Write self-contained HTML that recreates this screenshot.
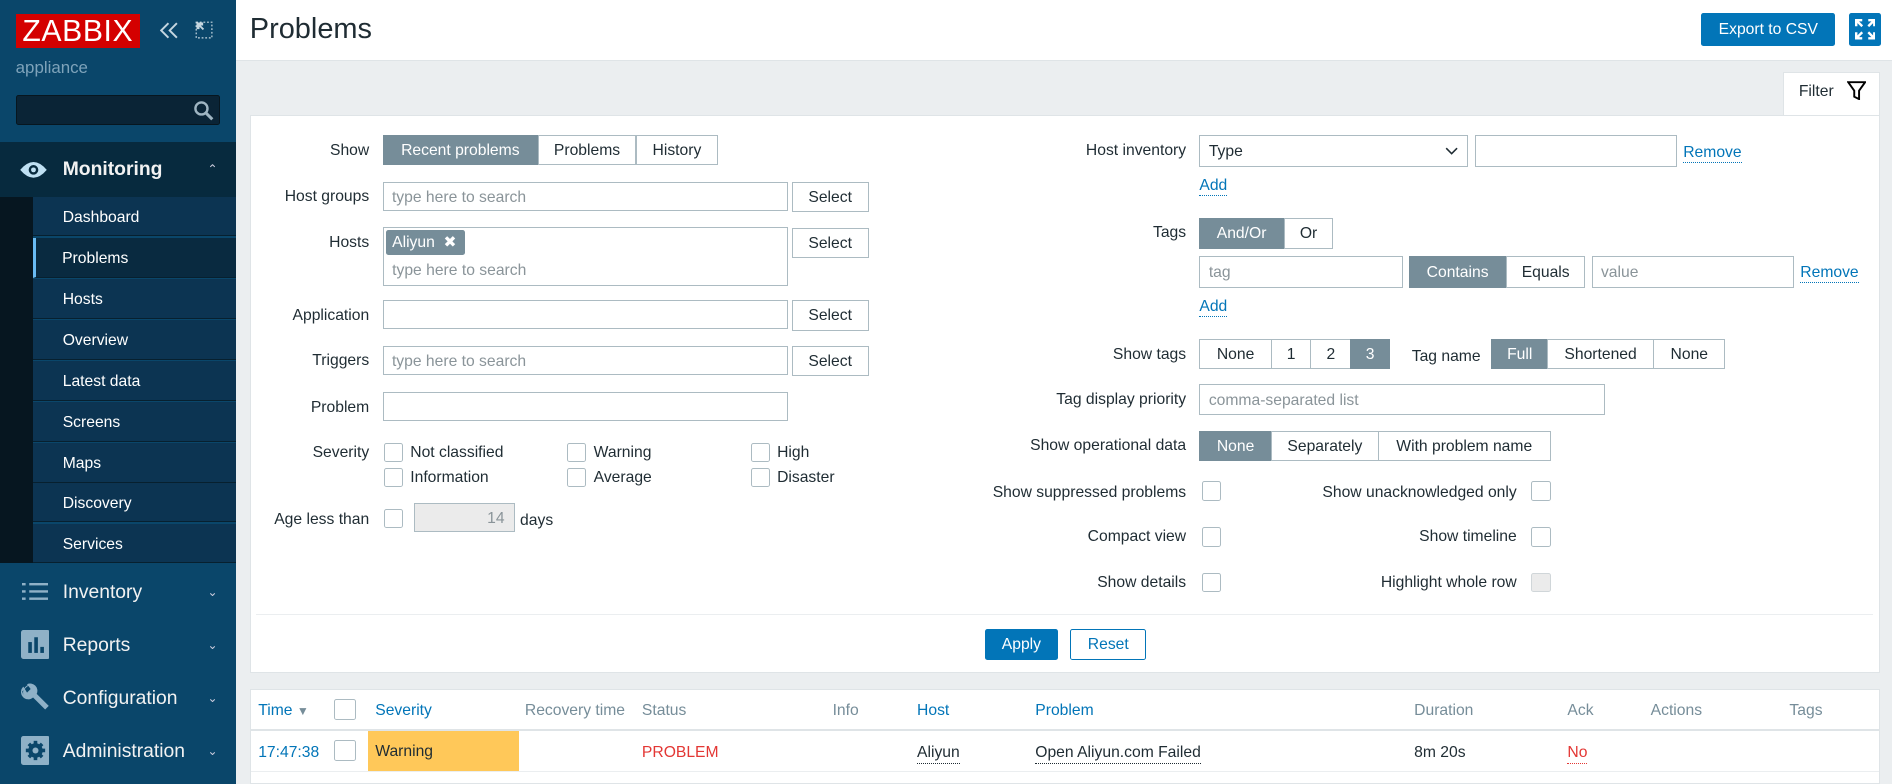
<!DOCTYPE html>
<html><head><meta charset="utf-8"><style>
html,body{margin:0;padding:0;overflow:hidden}
body{width:1568px;height:650px;zoom:1.20663;font-family:"Liberation Sans",Arial,sans-serif;font-size:13px;color:#1f2c33;background:#ebeef0;position:relative}
.a{position:absolute}
#side{left:0;top:0;width:196px;height:650px;background:#0a466a}
.logo{left:13px;top:12px;width:103px;height:28px;background:#d40000;color:#fff;font-size:25px;line-height:29px;text-align:center;letter-spacing:0.5px}
.sub{left:27px;width:169px;height:33px;background:#0c3452;border-bottom:1px solid #07202f;color:#fff;line-height:35px;padding-left:25px;box-sizing:border-box}
.mi{left:0;width:196px;height:44px;color:#f2f2f2;font-size:16px;line-height:46px}
.mi span.t{position:absolute;left:52px}
.mi span.c{position:absolute;left:172px;font-size:10px;color:#ccd}
.in{border:1px solid #acbbc2;background:#fff;height:24px;box-sizing:border-box;color:#8a9499;padding-left:7px;line-height:25px}
.btn{border:1px solid #acbbc2;background:#fff;height:25px;box-sizing:border-box;line-height:25px;text-align:center;color:#1f2c33}
.on{background:#768d99;color:#fff;border-color:#768d99}
.lbl{text-align:right;width:200px;line-height:27px}
.cb{width:16px;height:16px;border:1px solid #acbbc2;border-radius:2px;background:#fff;box-sizing:border-box}
.lnk{color:#0275b8;border-bottom:1px dotted #0275b8;line-height:15px}
.th{color:#0275b8;top:582px}
.thg{color:#768d99;top:582px}
.t2{top:617px}
</style></head><body>
<div id="side" class="a">
 <div class="a logo">ZABBIX</div>
 <svg class="a" style="left:133px;top:18px" width="16" height="14"><path d="M7 1L1 7L7 13M14 1L8 7L14 13" fill="none" stroke="#c5d6e0" stroke-width="1.6"/></svg>
 <svg class="a" style="left:162px;top:17px" width="15" height="15"><rect x="1" y="1" width="13" height="13" fill="none" stroke="#c5d6e0" stroke-dasharray="1.5 1.5"/><path d="M2 2L7 7M2 2H6V3H3V6H2Z" stroke="#c5d6e0" fill="#c5d6e0" stroke-width="1.5"/></svg>
 <div class="a" style="left:13px;top:48px;color:#7ea3ba;font-size:14px">appliance</div>
 <div class="a" style="left:13px;top:79px;width:169px;height:25px;background:#0a2436;border:1px solid #07161f;box-sizing:border-box;border-radius:2px"></div>
 <svg class="a" style="left:160px;top:83px" width="18" height="18"><circle cx="7" cy="7" r="5" stroke="#9fb5c2" stroke-width="2" fill="none"/><line x1="11" y1="11" x2="16" y2="16" stroke="#9fb5c2" stroke-width="2.5"/></svg>
 <div class="a mi" style="top:118px;height:45px;background:#072a3e"><svg class="a" style="left:16px;top:14px" width="24" height="18"><path d="M1 9Q12 -4 23 9Q12 22 1 9Z" fill="#bfe0f3"/><circle cx="12" cy="9" r="4" fill="#072a3e"/><circle cx="12" cy="9" r="2" fill="#bfe0f3"/></svg><span class="t" style="font-weight:bold">Monitoring</span><span class="c">⌃</span></div>
 <div class="a" style="left:0;top:163px;width:27px;height:304px;background:#061620"></div>
 <div class="a sub" style="top:163px">Dashboard</div>
 <div class="a sub" style="top:197px;background:#092a40;border-left:3px solid #69bbf3;padding-left:22px">Problems</div>
 <div class="a sub" style="top:231px">Hosts</div>
 <div class="a sub" style="top:265px">Overview</div>
 <div class="a sub" style="top:299px">Latest data</div>
 <div class="a sub" style="top:333px">Screens</div>
 <div class="a sub" style="top:367px">Maps</div>
 <div class="a sub" style="top:400px">Discovery</div>
 <div class="a sub" style="top:434px">Services</div>
 <div class="a mi" style="top:468px"><svg class="a" style="left:18px;top:15px" width="22" height="14" fill="#8fb1c7"><rect x="0" y="0" width="3" height="2"/><rect x="6" y="0" width="16" height="2"/><rect x="0" y="6" width="3" height="2"/><rect x="6" y="6" width="16" height="2"/><rect x="0" y="12" width="3" height="2"/><rect x="6" y="12" width="16" height="2"/></svg><span class="t">Inventory</span><span class="c">⌄</span></div>
 <div class="a mi" style="top:512px"><svg class="a" style="left:17px;top:10px" width="24" height="24"><rect width="24" height="24" rx="2" fill="#8fb1c7"/><rect x="6" y="10" width="3" height="9" fill="#0a466a"/><rect x="11" y="6" width="3" height="13" fill="#0a466a"/><rect x="16" y="14" width="3" height="5" fill="#0a466a"/></svg><span class="t">Reports</span><span class="c">⌄</span></div>
 <div class="a mi" style="top:556px"><svg class="a" style="left:17px;top:10px" width="24" height="24"><path d="M9 1A7 7 0 0 0 2 10L1 7L5 3ZM2 3A6 6 0 0 0 10 12L20 22L23 19L13 9A6 6 0 0 0 5 1L8 5L5 8Z" fill="#8fb1c7"/></svg><span class="t">Configuration</span><span class="c">⌄</span></div>
 <div class="a mi" style="top:600px"><svg class="a" style="left:17px;top:10px" width="24" height="24"><rect width="24" height="24" rx="2" fill="#8fb1c7"/><circle cx="12" cy="12" r="6" fill="#0a466a"/><g stroke="#0a466a" stroke-width="3"><line x1="12" y1="4" x2="12" y2="20"/><line x1="4" y1="12" x2="20" y2="12"/><line x1="6.5" y1="6.5" x2="17.5" y2="17.5"/><line x1="17.5" y1="6.5" x2="6.5" y2="17.5"/></g><circle cx="12" cy="12" r="2.5" fill="#8fb1c7"/></svg><span class="t">Administration</span><span class="c">⌄</span></div>
</div>
<div class="a" style="left:196px;top:0;width:1372px;height:50px;background:#fff;border-bottom:1px solid #dfe4e7"></div>
<div class="a" style="left:207px;top:11px;font-size:24px;color:#1f2c33">Problems</div>
<div class="a" style="left:1410px;top:11px;width:111px;height:27px;background:#0275b8;border-radius:2px;color:#fff;text-align:center;line-height:28px">Export to CSV</div>
<div class="a" style="left:1532px;top:11px;width:27px;height:27px;background:#0275b8;border-radius:2px"><svg class="a" style="left:5px;top:5px" width="17" height="17" fill="none" stroke="#fff" stroke-width="2"><path d="M1 6V1H6M1 1L6 6M16 6V1H11M16 1L11 6M1 11V16H6M1 16L6 11M16 11V16H11M16 16L11 11"/></svg></div>
<div class="a" style="left:1478px;top:60px;width:80px;height:36px;background:#fff;border:1px solid #dfe4e7;border-bottom:none;box-sizing:border-box"><span class="a" style="left:12px;top:8px;color:#1f2c33">Filter</span><svg class="a" style="left:52px;top:6px" width="16" height="16"><path d="M1 1H15L10 8V15L6 13V8Z" fill="none" stroke="#000" stroke-width="1.6"/></svg></div>
<div class="a" style="left:207px;top:95px;width:1351px;height:463px;background:#fff;border:1px solid #dfe4e7;box-sizing:border-box"></div>
<!-- left form -->
<div class="a lbl" style="left:106px;top:112px">Show</div>
<div class="a btn on" style="left:317px;top:112px;width:129px">Recent problems</div>
<div class="a btn" style="left:446px;top:112px;width:81px">Problems</div>
<div class="a btn" style="left:527px;top:112px;width:68px">History</div>
<div class="a lbl" style="left:106px;top:150px">Host groups</div>
<div class="a in" style="left:317px;top:151px;width:336px">type here to search</div>
<div class="a btn" style="left:656px;top:151px;width:64px">Select</div>
<div class="a lbl" style="left:106px;top:188px">Hosts</div>
<div class="a in" style="left:317px;top:188px;width:336px;height:49px"></div>
<div class="a" style="left:320px;top:191px;width:65px;height:20px;background:#768d99;color:#fff;border-radius:2px;line-height:21px;padding-left:5px;box-sizing:border-box">Aliyun &nbsp;✖</div>
<div class="a" style="left:325px;top:217px;color:#8a9499">type here to search</div>
<div class="a btn" style="left:656px;top:189px;width:64px">Select</div>
<div class="a lbl" style="left:106px;top:249px">Application</div>
<div class="a in" style="left:317px;top:249px;width:336px"></div>
<div class="a btn" style="left:656px;top:249px;width:64px">Select</div>
<div class="a lbl" style="left:106px;top:286px">Triggers</div>
<div class="a in" style="left:317px;top:287px;width:336px">type here to search</div>
<div class="a btn" style="left:656px;top:287px;width:64px">Select</div>
<div class="a lbl" style="left:106px;top:325px">Problem</div>
<div class="a in" style="left:317px;top:325px;width:336px"></div>
<div class="a lbl" style="left:106px;top:362px">Severity</div>
<div class="a cb" style="left:318px;top:367px"></div><div class="a" style="left:340px;top:368px">Not classified</div>
<div class="a cb" style="left:318px;top:388px"></div><div class="a" style="left:340px;top:389px">Information</div>
<div class="a cb" style="left:470px;top:367px"></div><div class="a" style="left:492px;top:368px">Warning</div>
<div class="a cb" style="left:470px;top:388px"></div><div class="a" style="left:492px;top:389px">Average</div>
<div class="a cb" style="left:622px;top:367px"></div><div class="a" style="left:644px;top:368px">High</div>
<div class="a cb" style="left:622px;top:388px"></div><div class="a" style="left:644px;top:389px">Disaster</div>
<div class="a lbl" style="left:106px;top:418px">Age less than</div>
<div class="a cb" style="left:318px;top:422px"></div>
<div class="a in" style="left:343px;top:417px;width:84px;background:#ebebeb;text-align:right;padding-right:8px">14</div>
<div class="a" style="left:431px;top:424px">days</div>
<!-- right form -->
<div class="a lbl" style="left:783px;top:112px">Host inventory</div>
<div class="a in" style="left:994px;top:112px;width:223px;height:26px;color:#1f2c33;line-height:26px">Type<svg class="a" style="right:8px;top:9px" width="11" height="7"><path d="M1 1L5.5 5.5L10 1" fill="none" stroke="#1f2c33" stroke-width="1.3"/></svg></div>
<div class="a in" style="left:1222px;top:112px;width:168px;height:26px"></div>
<div class="a lnk" style="left:1395px;top:119px">Remove</div>
<div class="a lnk" style="left:994px;top:147px">Add</div>
<div class="a lbl" style="left:783px;top:180px">Tags</div>
<div class="a btn on" style="left:994px;top:181px;width:70px">And/Or</div>
<div class="a btn" style="left:1064px;top:181px;width:41px">Or</div>
<div class="a in" style="left:994px;top:212px;width:169px;height:27px;line-height:27px">tag</div>
<div class="a btn on" style="left:1168px;top:212px;width:80px;height:27px;line-height:27px">Contains</div>
<div class="a btn" style="left:1248px;top:212px;width:66px;height:27px;line-height:27px">Equals</div>
<div class="a in" style="left:1319px;top:212px;width:168px;height:27px;line-height:27px">value</div>
<div class="a lnk" style="left:1492px;top:219px">Remove</div>
<div class="a lnk" style="left:994px;top:247px">Add</div>
<div class="a lbl" style="left:783px;top:281px">Show tags</div>
<div class="a btn" style="left:994px;top:281px;width:60px">None</div>
<div class="a btn" style="left:1053px;top:281px;width:34px">1</div>
<div class="a btn" style="left:1086px;top:281px;width:34px">2</div>
<div class="a btn on" style="left:1119px;top:281px;width:33px">3</div>
<div class="a" style="left:1170px;top:288px">Tag name</div>
<div class="a btn on" style="left:1236px;top:281px;width:47px">Full</div>
<div class="a btn" style="left:1282px;top:281px;width:89px">Shortened</div>
<div class="a btn" style="left:1370px;top:281px;width:60px">None</div>
<div class="a lbl" style="left:783px;top:318px">Tag display priority</div>
<div class="a in" style="left:994px;top:318px;width:336px;height:26px;line-height:26px">comma-separated list</div>
<div class="a lbl" style="left:783px;top:356px">Show operational data</div>
<div class="a btn on" style="left:994px;top:357px;width:60px">None</div>
<div class="a btn" style="left:1053px;top:357px;width:90px">Separately</div>
<div class="a btn" style="left:1142px;top:357px;width:143px">With problem name</div>
<div class="a lbl" style="left:783px;top:395px">Show suppressed problems</div>
<div class="a cb" style="left:996px;top:399px"></div>
<div class="a lbl" style="left:1057px;top:395px">Show unacknowledged only</div>
<div class="a cb" style="left:1269px;top:399px"></div>
<div class="a lbl" style="left:783px;top:432px">Compact view</div>
<div class="a cb" style="left:996px;top:437px"></div>
<div class="a lbl" style="left:1057px;top:432px">Show timeline</div>
<div class="a cb" style="left:1269px;top:437px"></div>
<div class="a lbl" style="left:783px;top:470px">Show details</div>
<div class="a cb" style="left:996px;top:475px"></div>
<div class="a lbl" style="left:1057px;top:470px">Highlight whole row</div>
<div class="a cb" style="left:1269px;top:475px;background:#ebebeb;border-color:#d0d6d9"></div>
<div class="a" style="left:212px;top:509px;width:1340px;height:1px;background:#ebeef0"></div>
<div class="a" style="left:816px;top:521px;width:61px;height:26px;background:#0275b8;color:#fff;border-radius:2px;text-align:center;line-height:27px">Apply</div>
<div class="a" style="left:887px;top:521px;width:63px;height:26px;border:1px solid #0275b8;box-sizing:border-box;color:#0275b8;border-radius:2px;text-align:center;line-height:25px">Reset</div>
<!-- table -->
<div class="a" style="left:207px;top:571px;width:1351px;height:79px;background:#fff;border:1px solid #dfe4e7;box-sizing:border-box"></div>
<div class="a" style="left:208px;top:604px;width:1349px;height:2px;background:#dfe4e7"></div>
<div class="a" style="left:208px;top:639px;width:1349px;height:1px;background:#ebeef0"></div>
<div class="a th" style="left:214px">Time <span style="color:#768d99;font-size:10px">▼</span></div>
<div class="a cb" style="left:277px;top:579px;width:18px;height:18px"></div>
<div class="a th" style="left:311px">Severity</div>
<div class="a thg" style="left:435px">Recovery time</div>
<div class="a thg" style="left:532px">Status</div>
<div class="a thg" style="left:690px">Info</div>
<div class="a th" style="left:760px">Host</div>
<div class="a th" style="left:858px">Problem</div>
<div class="a thg" style="left:1172px">Duration</div>
<div class="a thg" style="left:1299px">Ack</div>
<div class="a thg" style="left:1368px">Actions</div>
<div class="a thg" style="left:1483px">Tags</div>
<div class="a t2" style="left:214px;color:#0275b8">17:47:38</div>
<div class="a cb" style="left:277px;top:613px;width:18px;height:18px"></div>
<div class="a" style="left:305px;top:606px;width:125px;height:33px;background:#ffc859;line-height:35px;padding-left:6px;box-sizing:border-box">Warning</div>
<div class="a t2" style="left:532px;color:#e33734">PROBLEM</div>
<div class="a t2" style="left:760px;border-bottom:1px dotted #1f2c33;line-height:15px">Aliyun</div>
<div class="a t2" style="left:858px;border-bottom:1px dotted #1f2c33;line-height:15px">Open Aliyun.com Failed</div>
<div class="a t2" style="left:1172px">8m 20s</div>
<div class="a t2" style="left:1299px;color:#e33734;border-bottom:1px dotted #e33734;line-height:15px">No</div>
</body></html>
